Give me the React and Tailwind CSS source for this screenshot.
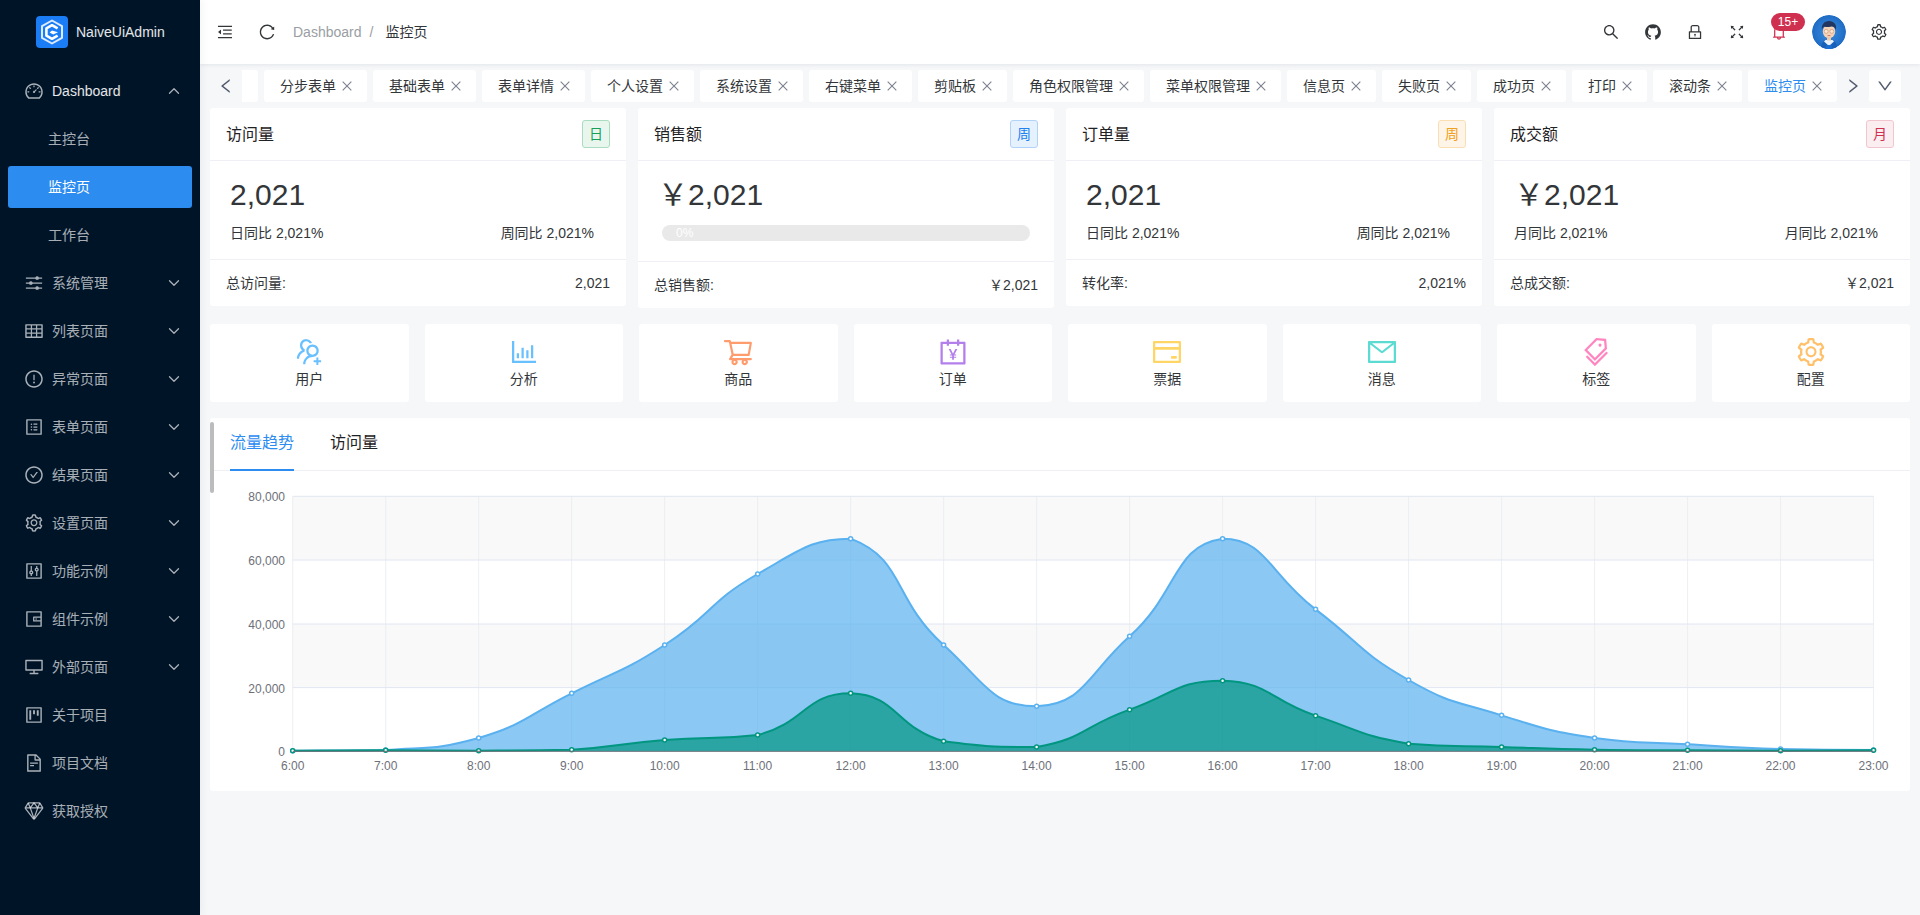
import React from "react";
import {
  AiOutlineDashboard, AiOutlineTable, AiOutlineExclamationCircle, AiOutlineProfile, AiOutlineCheckCircle,
  AiOutlineSetting, AiOutlineControl, AiOutlineWallet, AiOutlineDesktop, AiOutlineProject, AiOutlineFileText,
  AiOutlineMenuFold, AiOutlineReload, AiOutlineSearch, AiOutlineGithub, AiOutlineLock, AiOutlineFullscreen,
  AiOutlineBell, AiOutlineClose, AiOutlineLeft, AiOutlineRight, AiOutlineDown,
  AiOutlineUsergroupAdd, AiOutlineBarChart, AiOutlineShoppingCart, AiOutlineAccountBook, AiOutlineCreditCard,
  AiOutlineMail, AiOutlineTags,
} from "react-icons/ai";
import { IoOptionsSharp, IoDiamondOutline } from "react-icons/io5";
import { ChevronDown, ChevronUp } from "lucide-react";

const menu = [
  { Icon: IoOptionsSharp, label: "系统管理", arrow: true },
  { Icon: AiOutlineTable, label: "列表页面", arrow: true },
  { Icon: AiOutlineExclamationCircle, label: "异常页面", arrow: true },
  { Icon: AiOutlineProfile, label: "表单页面", arrow: true },
  { Icon: AiOutlineCheckCircle, label: "结果页面", arrow: true },
  { Icon: AiOutlineSetting, label: "设置页面", arrow: true },
  { Icon: AiOutlineControl, label: "功能示例", arrow: true },
  { Icon: AiOutlineWallet, label: "组件示例", arrow: true },
  { Icon: AiOutlineDesktop, label: "外部页面", arrow: true },
  { Icon: AiOutlineProject, label: "关于项目" },
  { Icon: AiOutlineFileText, label: "项目文档" },
  { Icon: IoDiamondOutline, label: "获取授权" },
];

const tabs = ["分步表单", "基础表单", "表单详情", "个人设置", "系统设置", "右键菜单", "剪贴板", "角色权限管理", "菜单权限管理", "信息页", "失败页", "成功页", "打印", "滚动条", "监控页"];

const quick = [
  { Icon: AiOutlineUsergroupAdd, label: "用户", c: "text-[#69c0ff]" },
  { Icon: AiOutlineBarChart, label: "分析", c: "text-[#69c0ff]" },
  { Icon: AiOutlineShoppingCart, label: "商品", c: "text-[#ff9c6e]" },
  { Icon: AiOutlineAccountBook, label: "订单", c: "text-[#b37feb]" },
  { Icon: AiOutlineCreditCard, label: "票据", c: "text-[#ffd666]" },
  { Icon: AiOutlineMail, label: "消息", c: "text-[#5cdbd3]" },
  { Icon: AiOutlineTags, label: "标签", c: "text-[#ff85c0]" },
  { Icon: AiOutlineSetting, label: "配置", c: "text-[#ffc069]" },
];

const cards = [
  { title: "访问量", tag: "日", tagC: "bg-[#e8f6ee] border-[#a9dcc0] text-[#18a058]", num: "2,021", l: "日同比 2,021%", r: "周同比 2,021%", fl: "总访问量:", fr: "2,021" },
  { title: "销售额", tag: "周", tagC: "bg-[#e6f1fe] border-[#b1d2f9] text-[#2080f0]", num: "￥2,021", progress: true, fl: "总销售额:", fr: "￥2,021" },
  { title: "订单量", tag: "周", tagC: "bg-[#fef5e8] border-[#fadfb3] text-[#f0a020]", num: "2,021", l: "日同比 2,021%", r: "周同比 2,021%", fl: "转化率:", fr: "2,021%" },
  { title: "成交额", tag: "月", tagC: "bg-[#fbeef1] border-[#f2c5ce] text-[#d03050]", num: "￥2,021", l: "月同比 2,021%", r: "月同比 2,021%", fl: "总成交额:", fr: "￥2,021" },
];

function Logo() {
  return (
    <svg width="32" height="32" viewBox="0 0 32 32" className="shrink-0">
      <rect width="32" height="32" rx="4" fill="#1a7df5" />
      <path d="M16 4.5 26 10.2V21.8L16 27.5 6 21.8V10.2Z" fill="none" stroke="#dcebff" strokeWidth="2" strokeLinejoin="round" />
      <path d="M21.6 12.4 16 9.2 10.4 12.4V19.6L16 22.8 21.6 19.6" fill="none" stroke="#fff" strokeWidth="2.6" strokeLinejoin="round" />
      <path d="M13.6 16.6 16 14.4 22 16.2 17.2 18.4Z" fill="#fff" />
    </svg>
  );
}

function Avatar() {
  return (
    <svg width="34" height="34" viewBox="0 0 34 34" className="shrink-0 rounded-full">
      <defs>
        <radialGradient id="av" cx="50%" cy="50%" r="55%">
          <stop offset="0%" stopColor="#3b8de0" />
          <stop offset="100%" stopColor="#1c68c2" />
        </radialGradient>
      </defs>
      <circle cx="17" cy="17" r="17" fill="url(#av)" />
      <path d="M9 34c0-6 2-9 8-9s8 3 8 9Z" fill="#1a5fb8" />
      <path d="M12 26.5 17 31l5-4.5-1.5-1.5h-7Z" fill="#e8f2fb" />
      <path d="M14.5 30h5l1 4h-7Z" fill="#1b6fd0" />
      <ellipse cx="17" cy="16.5" rx="6.2" ry="6.8" fill="#f4d3b8" />
      <rect x="15" y="21.5" width="4" height="4" fill="#eec7a8" />
      <path d="M10 15c-1-5 2-9 7-9s8 3.5 7 9c-.8-2.5-2.3-3.6-4.5-3.6-2.8.8-6.5.8-7.5.2-1 .8-1.8 2-2 3.4Z" fill="#22365f" />
      <circle cx="14.2" cy="16.4" r="2" fill="#fbe6d4" stroke="#c98f6a" strokeWidth=".6" />
      <circle cx="19.8" cy="16.4" r="2" fill="#fbe6d4" stroke="#c98f6a" strokeWidth=".6" />
      <path d="M15.6 20.5h2.8" stroke="#c9655a" strokeWidth=".8" />
    </svg>
  );
}

function Sidebar() {
  return (
    <aside className="z-20 flex w-[200px] shrink-0 flex-col bg-[#001428] text-sm text-white/[.67] shadow-[2px_0_8px_0_rgba(29,35,41,0.05)]">
      <div className="flex h-16 items-center gap-2 pl-9">
        <Logo />
        <span className="text-white/90">NaiveUiAdmin</span>
      </div>
      <nav className="flex flex-col gap-[6px] px-2 pt-[6px]">
        <div className="flex h-[42px] items-center pl-[17px]">
          <span className="flex w-[18px] justify-center"><AiOutlineDashboard size={20} className="shrink-0" /></span>
          <span className="ml-[9px] flex-1 text-white/90">Dashboard</span>
          <ChevronUp size={18} strokeWidth={1.7} className="mr-[9px]" />
        </div>
        <div className="flex h-[42px] items-center pl-10">主控台</div>
        <div className="flex h-[42px] items-center rounded-[3px] bg-[#2d8cf0] pl-10 text-white">监控页</div>
        <div className="flex h-[42px] items-center pl-10">工作台</div>
        {menu.map(({ Icon, label, arrow }) => (
          <div key={label} className="flex h-[42px] items-center pl-[17px]">
            <span className="flex w-[18px] justify-center"><Icon size={20} className="shrink-0" /></span>
            <span className="ml-[9px] flex-1">{label}</span>
            {arrow && <ChevronDown size={18} strokeWidth={1.7} className="mr-[9px]" />}
          </div>
        ))}
      </nav>
    </aside>
  );
}

function HeaderIcon({ children }) {
  return <span className="flex h-16 w-[42px] items-center justify-center text-[#333639]">{children}</span>;
}

function Header() {
  return (
    <header className="z-10 flex h-16 shrink-0 items-center bg-white pl-4 pr-5 text-sm shadow-[0_1px_4px_rgba(0,21,41,0.08)]">
      <AiOutlineMenuFold size={18} className="text-[#333639]" />
      <AiOutlineReload size={18} className="ml-6 text-[#333639]" />
      <span className="ml-[17px] text-[#9a9ea3]">Dashboard</span>
      <span className="ml-2 mr-3 text-[#9a9ea3]">/</span>
      <span className="text-[#333639]">监控页</span>
      <div className="ml-auto flex items-center">
        <HeaderIcon><AiOutlineSearch size={18} /></HeaderIcon>
        <HeaderIcon><AiOutlineGithub size={18} /></HeaderIcon>
        <HeaderIcon><AiOutlineLock size={18} /></HeaderIcon>
        <HeaderIcon><AiOutlineFullscreen size={18} /></HeaderIcon>
        <span className="relative flex h-16 w-[42px] items-center justify-center text-[#d03050]">
          <AiOutlineBell size={18} />
          <span className="absolute left-[13px] top-[13px] flex h-[18px] w-[34px] items-center justify-center rounded-full bg-[#d03050] text-xs text-white">15+</span>
        </span>
        <span className="ml-3"><Avatar /></span>
        <span className="ml-3"><HeaderIcon><AiOutlineSetting size={18} /></HeaderIcon></span>
      </div>
    </header>
  );
}

function TabsBar() {
  return (
    <div className="mt-[6px] flex h-8 shrink-0 items-center pl-[14px] pr-[19px] text-sm text-[#333639]">
      <span className="mr-1 flex h-8 w-6 items-center justify-center text-[#515a6e]"><AiOutlineLeft size={18} /></span>
      <div className="flex flex-1 items-center gap-[6px]">
        <span className="h-8 w-4 rounded-r-[3px] bg-white" />
        {tabs.map((t, i) => (
          <div key={t} className="flex h-8 items-center rounded-[3px] bg-white pl-4 pr-[13px]">
            <span className={i === tabs.length - 1 ? "text-[#2d8cf0]" : ""}>{t}</span>
            <span className="ml-1 flex w-[14px] justify-center text-[#7d8290]"><AiOutlineClose size={14} /></span>
          </div>
        ))}
      </div>
      <span className="flex h-8 w-8 items-center justify-center text-[#515a6e]"><AiOutlineRight size={18} /></span>
      <span className="flex h-8 w-8 items-center justify-center rounded-[3px] bg-white text-[#515a6e]"><AiOutlineDown size={18} /></span>
    </div>
  );
}

function StatCard({ c }) {
  return (
    <div className="rounded-[3px] bg-white text-sm text-[#333639]">
      <div className="flex h-[53px] items-center justify-between border-b border-[#efeff5] px-4">
        <span className="pt-[2px] text-base text-[#1f2225]">{c.title}</span>
        <span className={`flex h-7 w-7 items-center justify-center rounded-[3px] border ${c.tagC}`}>{c.tag}</span>
      </div>
      <div className={`px-5 pt-[15px] ${c.progress ? "h-[100px]" : "h-[98px]"}`}>
        <div className="text-[30px] leading-[38px] text-[#333639]">{c.num}</div>
        {c.progress ? (
          <div className="mx-1 mt-[11px] flex h-4 items-center rounded-full bg-[#e9e9e9] pl-[14px] text-xs text-white">0%</div>
        ) : (
          <div className="mt-2 flex justify-between pr-3 leading-[22px]">
            <span>{c.l}</span>
            <span>{c.r}</span>
          </div>
        )}
      </div>
      <div className="flex h-[47px] items-center justify-between border-t border-[#efeff5] px-4">
        <span>{c.fl}</span>
        <span>{c.fr}</span>
      </div>
    </div>
  );
}

const blue = [1022, 1020, 984, 850, 705, 492, 386, 705, 889, 679, 386, 598, 810, 916, 984, 1003, 1017, 1020];
const green = [1022, 1021, 1022, 1019, 990, 975, 850, 994, 1011, 899, 812, 917, 1001, 1011, 1019, 1021, 1022, 1021];
const X0 = 82.7;
const DX = 92.99;
const BASE = 280.3;
const GRID = [25.3, 89, 153, 216.6, 280.3];
const pts = (arr) => arr.map((z, i) => [X0 + DX * i, z / 3 - 61]);

function smooth(points) {
  const s = 0.5;
  const cps = points.map((p, i) => {
    const prev = points[i - 1];
    const next = points[i + 1];
    if (!prev || !next) return { inn: p, out: p };
    const v = [next[0] - prev[0], next[1] - prev[1]];
    const a = Math.hypot(p[0] - prev[0], p[1] - prev[1]);
    const b = Math.hypot(next[0] - p[0], next[1] - p[1]);
    const r = b / (a + b);
    const clamp = (val, q, w) => Math.min(Math.max(q, w), Math.max(Math.min(q, w), val));
    return {
      inn: [clamp(p[0] - v[0] * s * (1 - r), p[0], prev[0]), clamp(p[1] - v[1] * s * (1 - r), p[1], prev[1])],
      out: [clamp(p[0] + v[0] * s * r, p[0], next[0]), clamp(p[1] + v[1] * s * r, p[1], next[1])],
    };
  });
  let d = `M${points[0][0]} ${points[0][1]}`;
  for (let i = 1; i < points.length; i++) {
    const c0 = cps[i - 1].out;
    const c1 = cps[i].inn;
    d += `C${c0[0].toFixed(2)} ${c0[1].toFixed(2)} ${c1[0].toFixed(2)} ${c1[1].toFixed(2)} ${points[i][0].toFixed(2)} ${points[i][1].toFixed(2)}`;
  }
  return d;
}

function Series({ data, color }) {
  const p = pts(data);
  const line = smooth(p);
  const area = `${line}L${p[p.length - 1][0]} ${BASE}L${p[0][0]} ${BASE}Z`;
  return (
    <g>
      <path d={area} fill={color} fillOpacity="0.7" />
      <path d={line} fill="none" stroke={color} strokeWidth="2" />
      {p.map(([x, y], i) => (
        <circle key={i} cx={x} cy={y} r="2" fill="#fff" stroke={color} strokeWidth="1.5" />
      ))}
    </g>
  );
}

function Chart() {
  const right = X0 + DX * 17;
  const hours = Array.from({ length: 18 }, (_, i) => `${i + 6}:00`);
  return (
    <svg width="1700" height="320" viewBox="0 0 1700 320" className="block">
      <rect x={X0} y={GRID[0]} width={right - X0} height={GRID[1] - GRID[0]} fill="#f9f9f9" />
      <rect x={X0} y={GRID[2]} width={right - X0} height={GRID[3] - GRID[2]} fill="#f9f9f9" />
      {hours.map((_, i) => (
        <line key={i} x1={X0 + DX * i} x2={X0 + DX * i} y1={GRID[0]} y2={BASE} stroke="#e8ebf1" strokeOpacity="0.8" />
      ))}
      {GRID.slice(0, 4).map((y) => (
        <line key={y} x1={X0} x2={right} y1={y} y2={y} stroke="#e0e6f1" />
      ))}
      <Series data={blue} color="#5ab1ef" />
      <Series data={green} color="#019680" />
      <line x1={X0} x2={right} y1={BASE} y2={BASE} stroke="#6e7079" />
      {["80,000", "60,000", "40,000", "20,000", "0"].map((t, i) => (
        <text key={t} x="75" y={GRID[i] + 5} textAnchor="end" fontSize="12" fill="#6e7079">{t}</text>
      ))}
      {hours.map((t, i) => (
        <text key={t} x={X0 + DX * i} y="299" textAnchor="middle" fontSize="12" fill="#6e7079">{t}</text>
      ))}
    </svg>
  );
}

export default function App() {
  return (
    <div className="flex h-[915px] w-full overflow-hidden bg-[#f5f7f9] font-['Liberation_Sans','Noto_Sans_CJK_SC',sans-serif]">
      <Sidebar />
      <div className="flex min-w-0 flex-1 flex-col">
        <Header />
        <TabsBar />
        <main className="px-[10px] pt-[6px]">
          <div className="grid grid-cols-4 items-start gap-3">
            {cards.map((c) => <StatCard key={c.title} c={c} />)}
          </div>
          <div className="mt-4 grid grid-cols-8 gap-4">
            {quick.map(({ Icon, label, c }) => (
              <div key={label} className="flex h-[78px] flex-col items-center rounded-[3px] bg-white pt-3 text-sm text-[#333639]">
                <Icon size={32} className={c} />
                <span className="leading-[22px]">{label}</span>
              </div>
            ))}
          </div>
          <div className="relative mt-4 h-[373px] rounded-[3px] bg-white">
            <span className="absolute left-0 top-1 h-[71px] w-[4px] rounded-[3px] bg-[#bcbcbc]" />
            <div className="flex h-[53px] items-end gap-9 border-b border-[#efeff5] pl-5 text-base">
              <span className="-mb-px border-b-2 border-[#2d8cf0] pb-[13px] leading-[26px] text-[#2d8cf0]">流量趋势</span>
              <span className="-mb-px border-b-2 border-transparent pb-[13px] leading-[26px] text-[#1f2225]">访问量</span>
            </div>
            <Chart />
          </div>
        </main>
      </div>
    </div>
  );
}
